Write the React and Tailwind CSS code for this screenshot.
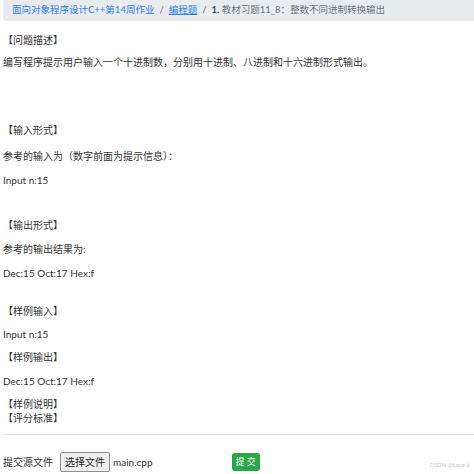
export default function App() {
  const font = { fontFamily: 'Lato, "Noto Sans CJK SC", sans-serif' };

  return (
    <div className="w-[474px] h-[474px] overflow-hidden bg-white text-[10px] text-[#333]" style={font}>
      <div className="ml-[3px] h-[21px] bg-[#e9ecef] rounded-bl-[4px] flex items-center pl-[9px] text-[9.5px] whitespace-nowrap">
        <span className="text-[#2f80ed]">面向对象程序设计C++第14周作业</span>
        <span className="text-[#6c757d] px-[5px]">/</span>
        <span className="text-[#2f80ed] underline">编程题</span>
        <span className="text-[#6c757d] px-[5px]">/</span>
        <span className="text-[#6c757d]">
          <b className="text-[#444]">1.</b> 教材习题11_8：整数不同进制转换输出
        </span>
      </div>

      <div className="pl-[3px] leading-[14px]">
        <div className="mt-[12px]">【问题描述】</div>
        <div className="mt-[8px]">编写程序提示用户输入一个十进制数，分别用十进制、八进制和十六进制形式输出。</div>
        <div className="mt-[54px]">【输入形式】</div>
        <div className="mt-[12px]">参考的输入为（数字前面为提示信息）：</div>
        <div className="mt-[10px]">Input n:15</div>
        <div className="mt-[31px]">【输出形式】</div>
        <div className="mt-[10px]">参考的输出结果为:</div>
        <div className="mt-[10px]">Dec:15 Oct:17 Hex:f</div>
        <div className="mt-[24px]">【样例输入】</div>
        <div className="mt-[9px]">Input n:15</div>
        <div className="mt-[9px]">【样例输出】</div>
        <div className="mt-[10px]">Dec:15 Oct:17 Hex:f</div>
        <div className="mt-[9px]">【样例说明】</div>
        <div>【评分标准】</div>
      </div>

      <div className="ml-[3px] mt-[9px] border-t border-[#e6e6e6]" />

      <div className="pl-[3px] mt-[17px] h-[20px] flex items-center">
        <span>提交源文件</span>
        <span className="ml-[7px] h-[20px] px-[4px] flex items-center bg-[#efefef] border border-[#8f8f8f] rounded-[2px] text-[#222]">
          选择文件
        </span>
        <span className="ml-[3px]">main.cpp</span>
        <span className="ml-[79px] h-[18px] w-[28px] flex items-center justify-center bg-[#28a745] text-white rounded-[3px] text-[9px]">
          提 交
        </span>
        <span className="ml-auto mr-[4px] mt-[4px] text-[6px] text-[#c8c8c8]">CSDN @Love 6</span>
      </div>
    </div>
  );
}
